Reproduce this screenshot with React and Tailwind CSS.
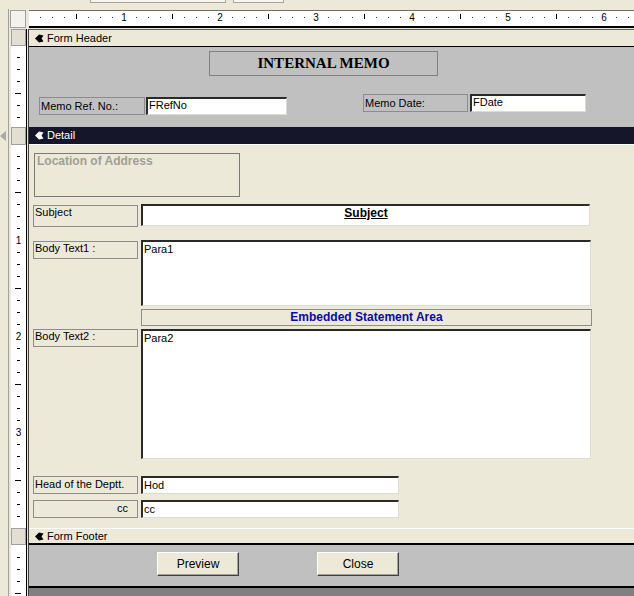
import React from 'react';

// horizontal ruler: 96px per inch, a mark every 1/8 inch
const HRuler = () => {
  const marks = [];
  for (let i = 1; i <= 50; i++) {
    const x = i * 12 - 1;
    if (i % 8 === 0) {
      marks.push(<text key={i} x={x} y={10} fontSize="10" textAnchor="middle" fill="#000" fontFamily="Liberation Sans, Arial, sans-serif">{i / 8}</text>);
    } else if (i % 4 === 0) {
      marks.push(<rect key={i} x={x} y={3} width={1} height={5} fill="#000" />);
    } else {
      marks.push(<rect key={i} x={x} y={6} width={1} height={1} fill="#333" />);
    }
  }
  return <svg width="605" height="15" className="block">{marks}</svg>;
};

const VRuler = ({ h, start = 0 }) => {
  const marks = [];
  for (let t = start + 1; t < start + h; t++) {
    if (t % 12 !== 0) continue;
    const i = t / 12;
    const y = t - start;
    if (i % 8 === 0) {
      marks.push(<text key={t} x={7.5} y={y + 4} fontSize="10" textAnchor="middle" fill="#000" fontFamily="Liberation Sans, Arial, sans-serif">{i / 8}</text>);
    } else if (i % 4 === 0) {
      marks.push(<rect key={t} x={4} y={y} width={6} height={1} fill="#000" />);
    } else {
      marks.push(<rect key={t} x={6} y={y} width={3} height={1} fill="#000" />);
    }
  }
  return <svg width="15" height={h} className="block">{marks}</svg>;
};

const Gutter = ({ h, start, sel, arrow }) => (
  <div className="w-[29px] flex shrink-0">
    <div className="w-[8px] flex items-center">
      {arrow && (
        <svg width="6" height="10" viewBox="0 0 6 10" className="block">
          <path d="M0 5 L6 0 L6 10 Z" fill="#a8a8a8" />
        </svg>
      )}
    </div>
    <div className="w-px bg-[#a0a0a0]" />
    <div className="w-[2px]" />
    {sel ? (
      <div className="w-[15px] border border-[#a0a0a0] bg-[#e2dfd2]" />
    ) : (
      <div className="w-[15px] bg-white overflow-hidden">
        <VRuler h={h} start={start} />
      </div>
    )}
    <div className="w-px bg-black" />
    <div className="w-px" />
    <div className="w-px bg-[#404040]" />
  </div>
);

const BarIcon = ({ color }) => (
  <svg width="9" height="9" viewBox="0 0 9 9" className="block">
    <path d="M0 4.5 L4 0.5 L8.5 1.5 L6.5 4.5 L8.5 7.5 L4 8.5 Z" fill={color} />
  </svg>
);

const Label = ({ className, children }) => (
  <div className={`border border-[#8c8c8c] px-[1px] leading-[13px] whitespace-nowrap ${className}`}>{children}</div>
);

const TextBox = ({ className, children }) => (
  <div className={`bg-white border-t-2 border-l-2 border-r border-b border-t-[#2a2a2a] border-l-[#2a2a2a] border-r-[#dcdcd4] border-b-[#dcdcd4] px-px leading-[13px] whitespace-nowrap ${className}`}>
    {children}
  </div>
);

const Button = ({ children }) => (
  <div className="w-[82px] h-[24px] bg-[#ece9d8] border border-t-white border-l-white border-r-[#404040] border-b-[#404040] shadow-[inset_-1px_-1px_0_#a0a0a0] flex items-center justify-center text-[12px]">
    {children}
  </div>
);

export default function App() {
  return (
    <div className="w-[634px] h-[596px] overflow-hidden bg-[#ece9d8] font-['Liberation_Sans',Arial,sans-serif] text-[11px] text-black flex flex-col">
      {/* toolbar remnants */}
      <div className="h-[9px] flex shrink-0">
        <div className="ml-[90px] w-[136px] h-[3px] border-x border-b border-[#a8a496] bg-[#f6f5f0]" />
        <div className="ml-[7px] w-[51px] h-[3px] border-x border-b border-[#a8a496] bg-[#f6f5f0]" />
      </div>

      {/* ruler */}
      <div className="h-[20px] flex shrink-0">
        <div className="w-[29px] flex shrink-0">
          <div className="w-[8px]" />
          <div className="w-px bg-[#a0a0a0]" />
          <div className="w-px" />
          <div className="mt-px w-[16px] h-[18px] border border-[#a0a0a0] bg-[#f3f2ec]" />
          <div className="w-[3px]" />
        </div>
        <div className="flex-1 mt-px h-[18px] bg-white border-t border-t-[#707070] border-b-2 border-b-black overflow-hidden">
          <HRuler />
        </div>
      </div>

      {/* Form Header bar */}
      <div className="h-[17px] flex shrink-0">
        <Gutter sel />
        <div className="flex-1 border-t border-t-[#5a5a5a] flex items-center pl-[6px] gap-[3px]">
          <BarIcon color="#000" />
          <span>Form Header</span>
        </div>
      </div>

      {/* Form Header section */}
      <div className="h-[81px] flex shrink-0">
        <Gutter h={81} start={1} />
        <div className="flex-1 border-t border-black bg-[#c0c0c0] pt-[4px]">
          <div className="ml-[180px] w-[229px] h-[25px] border border-[#808080] flex items-center justify-center font-['Liberation_Serif',serif] font-bold text-[15px]">
            INTERNAL MEMO
          </div>
          <div className="flex items-start mt-[18px]">
            <div className="flex ml-[10px] mt-[3px] gap-px">
              <Label className="w-[106px] h-[18px] flex items-center">Memo Ref. No.:</Label>
              <TextBox className="w-[141px] h-[18px]">FRefNo</TextBox>
            </div>
            <div className="flex ml-[76px] gap-[2px]">
              <Label className="w-[105px] h-[18px] flex items-center">Memo Date:</Label>
              <TextBox className="w-[116px] h-[18px]">FDate</TextBox>
            </div>
          </div>
        </div>
      </div>

      {/* Detail bar */}
      <div className="h-[18px] flex shrink-0">
        <Gutter sel arrow />
        <div className="flex-1 bg-[#16162a] border-b border-b-white flex items-center pl-[6px] gap-[3px] text-white">
          <BarIcon color="#fff" />
          <span>Detail</span>
        </div>
      </div>

      {/* Detail section */}
      <div className="h-[383px] flex shrink-0">
        <Gutter h={383} start={1} />
        <div className="flex-1 pl-[4px] pt-[8px]">
          <div className="ml-px w-[206px] h-[44px] border border-[#7a7a7a] px-[2px] text-[#a09e98] font-bold text-[12px] leading-[14px]">
            Location of Address
          </div>

          <div className="flex items-start gap-[3px] mt-[7px]">
            <Label className="w-[105px] h-[22px] mt-px">Subject</Label>
            <TextBox className="w-[449px] h-[22px] text-center font-bold text-[12px] leading-[14px]">
              <span className="underline">Subject</span>
            </TextBox>
          </div>

          <div className="flex items-start gap-[3px] mt-[13px]">
            <Label className="w-[105px] h-[18px] mt-px leading-[12px]">Body Text1 :</Label>
            <TextBox className="w-[450px] h-[66px] pt-px">Para1</TextBox>
          </div>

          <div className="ml-[108px] mt-[3px] w-[451px] h-[17px] border border-[#8c8c8c] text-center text-[#0a0aa8] font-bold text-[12px] leading-[14px]">
            Embedded Statement Area
          </div>

          <div className="flex items-start gap-[3px] mt-[3px]">
            <Label className="w-[105px] h-[18px] leading-[12px]">Body Text2 :</Label>
            <TextBox className="w-[450px] h-[130px] pt-px">Para2</TextBox>
          </div>

          <div className="flex items-start gap-[3px] mt-[17px]">
            <Label className="w-[105px] h-[18px] leading-[14px]">Head of the Deptt.</Label>
            <TextBox className="w-[258px] h-[18px] leading-[14px]">Hod</TextBox>
          </div>

          <div className="flex items-start gap-[3px] mt-[6px]">
            <Label className="w-[105px] h-[18px] leading-[14px] text-right pr-[9px]">cc</Label>
            <TextBox className="w-[258px] h-[18px] leading-[14px]">cc</TextBox>
          </div>
        </div>
      </div>

      {/* Form Footer bar */}
      <div className="h-[17px] flex shrink-0">
        <Gutter sel />
        <div className="flex-1 border-t border-t-white border-b-2 border-b-black flex items-center pl-[6px] gap-[3px]">
          <BarIcon color="#000" />
          <span>Form Footer</span>
        </div>
      </div>

      {/* Form Footer section */}
      <div className="h-[41px] flex shrink-0">
        <Gutter h={41} start={0} />
        <div className="flex-1 bg-[#c0c0c0] pt-[7px] pl-[128px] flex items-start gap-[78px]">
          <Button>Preview</Button>
          <Button>Close</Button>
        </div>
      </div>

      {/* below the form */}
      <div className="h-[10px] flex shrink-0">
        <Gutter h={10} start={41} />
        <div className="flex-1 border-t-2 border-black bg-[#808080]" />
      </div>
    </div>
  );
}
